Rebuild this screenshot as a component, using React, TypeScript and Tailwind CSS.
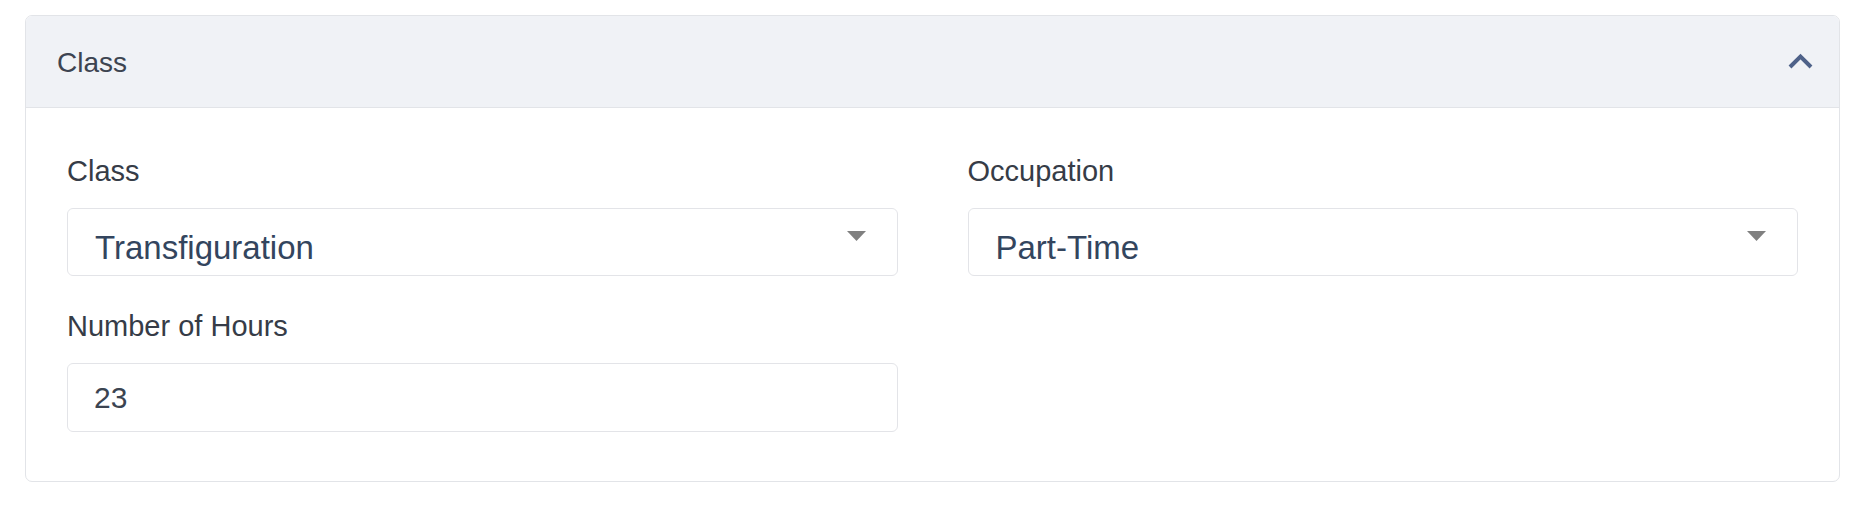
import React from 'react';

const Caret = ({ className }: { className?: string }) => (
  <svg className={className} width="19" height="10" viewBox="0 0 19 10">
    <polygon points="0,0 19,0 9.5,10" fill="#808080" />
  </svg>
);

const SelectBox = ({ value }: { value: string }) => (
  <div className="flex h-[68px] items-center justify-between rounded-[6px] border border-[#e3e4e8] bg-white pl-[27px] pr-[31px]">
    <span className="mt-[11px] text-[33px] leading-none text-[#33455e]">{value}</span>
    <Caret className="mb-[13px]" />
  </div>
);

const Label = ({ children }: { children: React.ReactNode }) => (
  <div className="mb-[17px] text-[29px] leading-[40px] text-[#363c47]">{children}</div>
);

export default function App() {
  return (
    <div className="min-h-screen bg-white pl-[25px] pt-[15px]" style={{ fontFamily: '"Liberation Sans", Arial, sans-serif' }}>
      <div className="w-[1815px] overflow-hidden rounded-[7px] border border-[#e2e4e8] bg-white">
        <div className="flex h-[92px] items-center justify-between border-b border-[#e2e4e8] bg-[#f0f2f6] pl-[31px] pr-[26px]">
          <span className="pt-[3px] text-[28px] leading-none text-[#3d4451]">Class</span>
          <svg width="25" height="16" viewBox="0 0 25 16" className="mb-[1px]">
            <polyline points="2,14 12.5,3.5 23,14" fill="none" stroke="#4f6289" strokeWidth="4" />
          </svg>
        </div>
        <div className="grid grid-cols-2 gap-x-[70px] gap-y-[30px] px-[41px] pb-[49px] pt-[43px]">
          <div>
            <Label>Class</Label>
            <SelectBox value="Transfiguration" />
          </div>
          <div>
            <Label>Occupation</Label>
            <SelectBox value="Part-Time" />
          </div>
          <div>
            <Label>Number of Hours</Label>
            <div className="flex h-[69px] items-center rounded-[6px] border border-[#e3e4e8] bg-white pl-[26px]">
              <span className="text-[30px] leading-none text-[#3b4451]">23</span>
            </div>
          </div>
        </div>
      </div>
    </div>
  );
}
